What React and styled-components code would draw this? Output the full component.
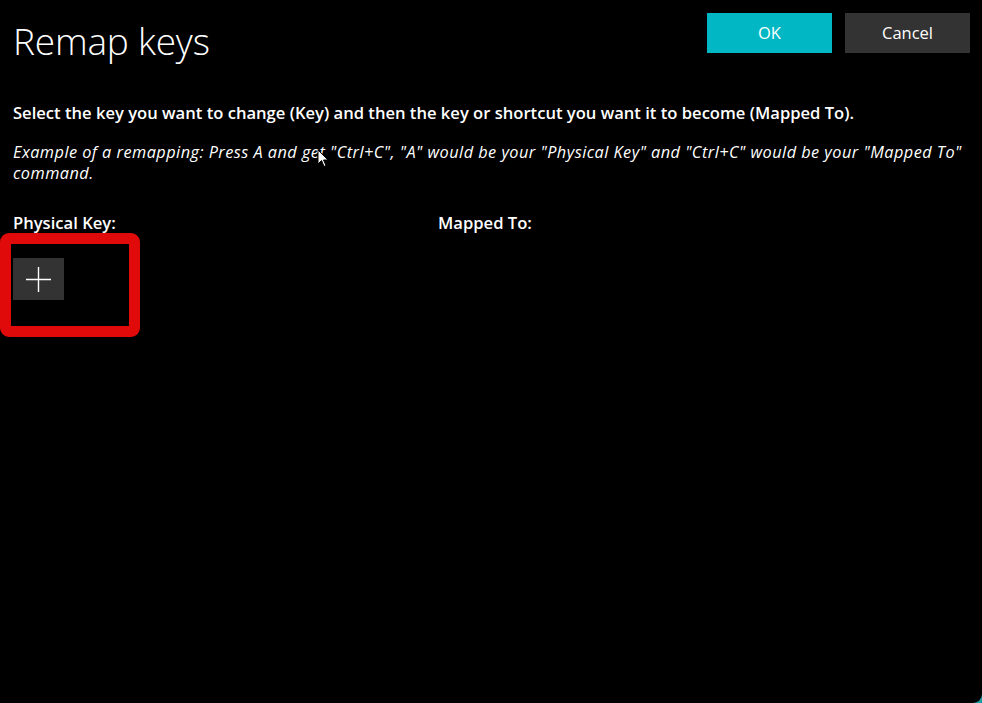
import React from 'react';
import styled, { createGlobalStyle } from 'styled-components';

const GlobalStyle = createGlobalStyle`
  html, body {
    margin: 0;
    padding: 0;
    background: #1b9aa0;
  }
  body {
    font-family: "Open Sans", "Noto Sans", sans-serif;
    color: #fff;
  }
`;

const Window = styled.div`
  position: relative;
  width: 982px;
  height: 703px;
  background: #000;
  border-bottom-right-radius: 9px;
  overflow: hidden;
  box-sizing: border-box;
  padding: 13px 12px 0 13px;
`;

const Header = styled.div`
  display: flex;
  justify-content: space-between;
  align-items: flex-start;
  height: 56px;
`;

const Title = styled.h1`
  margin: 0;
  font-size: 37px;
  font-weight: 300;
  line-height: 56px;
  letter-spacing: -0.2px;
`;

const Actions = styled.div`
  display: flex;
  gap: 13px;
`;

const ActionButton = styled.button`
  width: 125px;
  height: 40px;
  border: none;
  padding: 0 0 1px;
  font-family: "Open Sans", "Noto Sans", sans-serif;
  font-size: 16.5px;
  color: #fff;
  background: ${(p) => (p.$primary ? '#00b7c3' : '#333333')};
`;

const Instructions = styled.p`
  margin: 34px 0 0;
  font-size: 16.6px;
  font-weight: 600;
  line-height: 20px;
`;

const Example = styled.p`
  margin: 19px 0 0;
  font-size: 16.3px;
  font-style: italic;
  line-height: 21px;
  letter-spacing: 0.47px;
`;

const Columns = styled.div`
  display: grid;
  grid-template-columns: 425px 1fr;
  margin-top: 29px;
`;

const ColumnLabel = styled.div`
  font-size: 16.6px;
  font-weight: 600;
  line-height: 20px;
`;

const AddButton = styled.button`
  display: flex;
  align-items: center;
  justify-content: center;
  width: 51px;
  height: 42px;
  margin-top: 25px;
  border: none;
  padding: 0;
  background: #333333;
`;

const Highlight = styled.div`
  position: absolute;
  left: 0;
  top: 233px;
  width: 140px;
  height: 104px;
  box-sizing: border-box;
  border: 11px solid #e00a0a;
  border-radius: 9px;
  pointer-events: none;
`;

const Cursor = styled.svg`
  position: absolute;
  left: 317px;
  top: 149px;
`;

export default function App() {
  return (
    <>
      <GlobalStyle />
      <Window>
        <Header>
          <Title>Remap keys</Title>
          <Actions>
            <ActionButton $primary>OK</ActionButton>
            <ActionButton>Cancel</ActionButton>
          </Actions>
        </Header>
        <Instructions>
          Select the key you want to change (Key) and then the key or shortcut you want it to become (Mapped To).
        </Instructions>
        <Example>
          Example of a remapping: Press A and get "Ctrl+C", "A" would be your "Physical Key" and "Ctrl+C" would be your "Mapped To" command.
        </Example>
        <Columns>
          <div>
            <ColumnLabel>Physical Key:</ColumnLabel>
            <AddButton aria-label="Add">
              <svg width="25" height="25" viewBox="0 0 25 25">
                <path d="M12.5 0v25M0 12.5h25" stroke="#fff" strokeWidth="1.4" />
              </svg>
            </AddButton>
          </div>
          <div>
            <ColumnLabel>Mapped To:</ColumnLabel>
          </div>
        </Columns>
        <Highlight />
        <Cursor width="12" height="19" viewBox="0 0 12 19">
          <path d="M1 1v14l3.5-3.5 2.5 6 2-1-2.5-5.5H11z" fill="#fff" stroke="#000" strokeWidth="1" />
        </Cursor>
      </Window>
    </>
  );
}
